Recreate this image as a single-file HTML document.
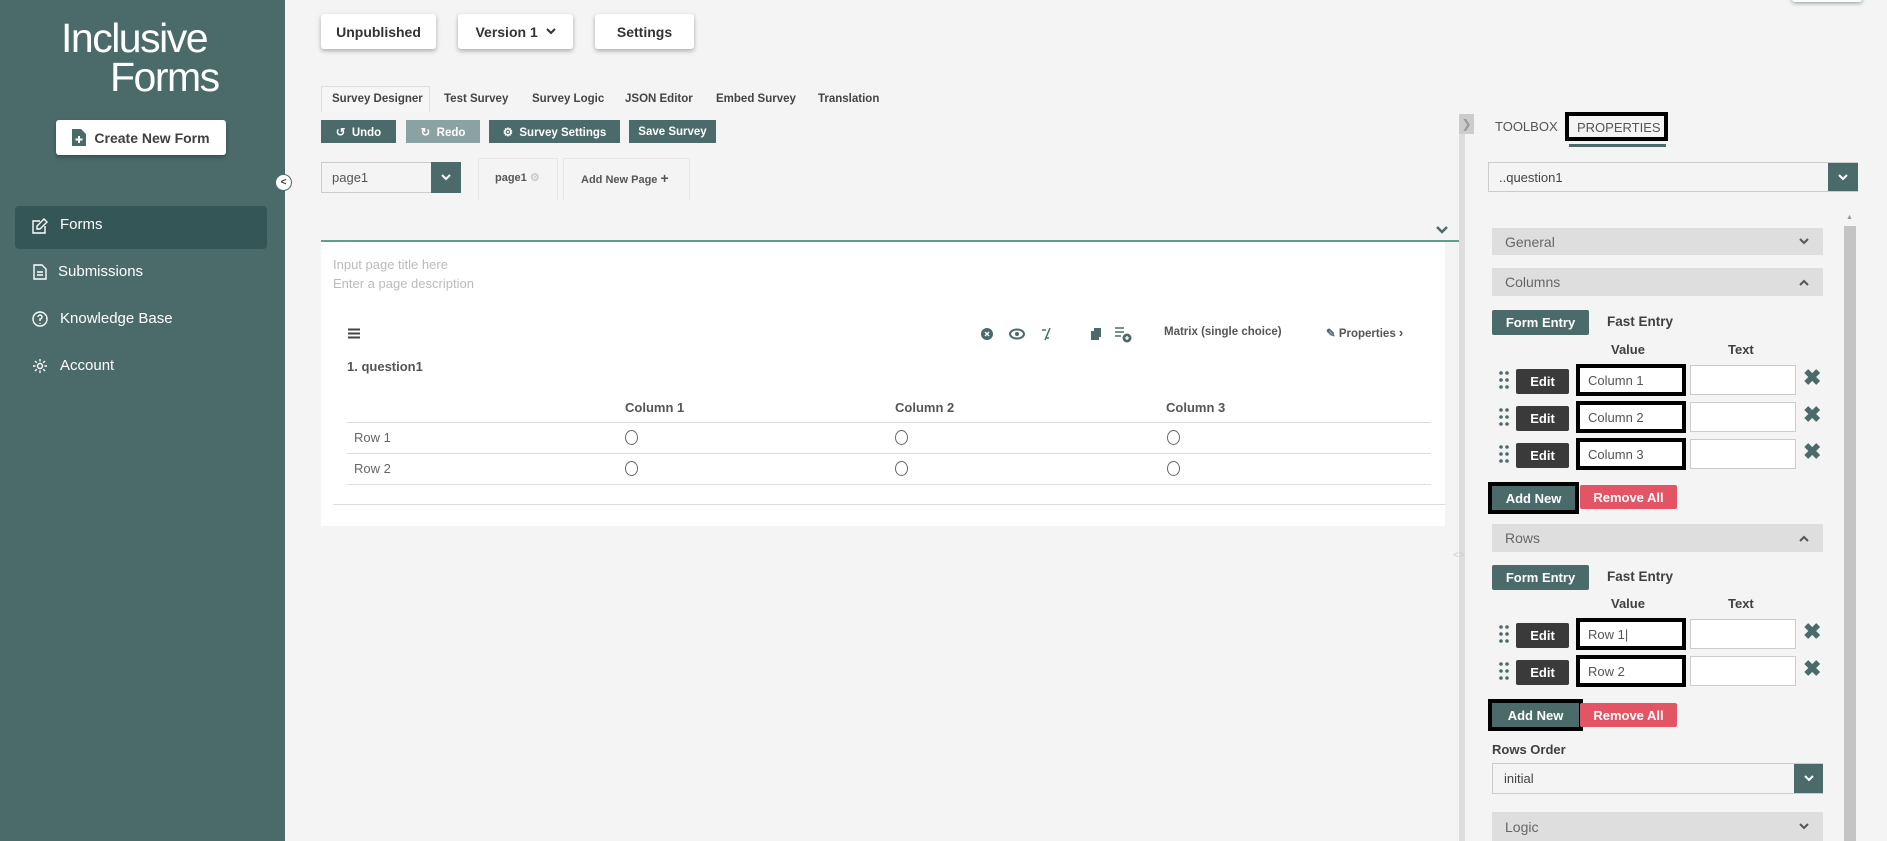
<!DOCTYPE html>
<html><head><meta charset="utf-8"><style>
*{box-sizing:border-box;margin:0;padding:0}
body{width:1887px;height:841px;overflow:hidden;background:#f4f4f4;font-family:"Liberation Sans",sans-serif;position:relative;color:#404040}
.a{position:absolute;white-space:nowrap}
#sb{left:0;top:0;width:285px;height:841px;background:#4b6b6b}
.logo{color:#fff;font-size:41px;line-height:40px;letter-spacing:-1.5px}
.nav{color:#fff;font-size:15px;left:58px}
.nv{left:32px;width:16px;height:16px}
.tb{background:#fff;border-radius:3px;box-shadow:0 2px 5px rgba(0,0,0,.3);font-size:14px;font-weight:bold;color:#333;display:flex;align-items:center;justify-content:center}
.tab{font-size:11.5px;font-weight:bold;color:#444;top:93px}
.gb{background:#4b6b6b;color:#fff;font-size:11.5px;font-weight:bold;display:flex;align-items:center;justify-content:center;height:23px;top:120px}
.bar{background:#dedede;color:#666;font-size:14px;display:flex;align-items:center;padding-left:13px;left:1492px;width:331px}
.bar svg{position:absolute;right:14px}
.fe{background:#4b6b6b;color:#fff;font-weight:bold;font-size:13px;left:1492px;width:97px;height:25px;display:flex;align-items:center;justify-content:center;border-radius:2px}
.fe2{left:1607px;font-size:13.5px;font-weight:bold;color:#404040}
.hd{font-size:13px;font-weight:bold;color:#404040}
.ed{left:1516px;width:53px;height:25px;background:#3a3a3a;color:#fff;font-weight:bold;font-size:13px;display:flex;align-items:center;justify-content:center;border-radius:2px}
.vi{left:1576px;width:110px;height:32px;border:4px solid #000;background:#fff;font-size:13px;color:#555;padding:5px 0 0 8px}
.ti{left:1690px;width:106px;height:30px;border:1px solid #ccc;background:#fff}
.x{left:1803px;font-size:22px;font-weight:bold;color:#4b6b6b;line-height:22px}
.dr{left:1499px;width:10px;height:18px}
.an{left:1488px;width:91px;height:32px;border:4px solid #000;background:#4b6b6b;color:#fff;font-weight:bold;font-size:13px;display:flex;align-items:center;justify-content:center}
.ra{left:1580px;width:97px;height:24px;background:#e35565;color:#fff;font-weight:bold;font-size:13px;display:flex;align-items:center;justify-content:center;border-radius:2px}
.rad{width:13px;height:15px;border:1px solid #666;border-radius:50%}
.ln{height:1px;background:#ddd}
.dd{background:#4b6b6b;display:flex;align-items:center;justify-content:center}
</style></head><body>
<div id="sb" class="a"></div>
<div class="a logo" style="left:61px;top:18px">Inclusive</div>
<div class="a logo" style="left:110px;top:57px">Forms</div>
<div class="a tb" style="left:56px;top:120px;width:170px;height:35px;font-size:14px;color:#404040;gap:8px"><svg width="14" height="17" viewBox="0 0 14 17"><path d="M0 0h9l5 5v12H0z" fill="#4b6b6b"/><path d="M7 7v7M3.5 10.5h7" stroke="#fff" stroke-width="2"/></svg>Create New Form</div>
<div class="a" style="left:275px;top:174px;width:17px;height:17px;border-radius:50%;background:#fff;border:1px solid #4b6b6b;font-size:10px;text-align:center;line-height:15px;font-weight:bold;color:#333">&lt;</div>
<div class="a" style="left:15px;top:206px;width:252px;height:43px;background:#345656;border-radius:4px"></div>
<svg class="a nv" style="top:218px" viewBox="0 0 16 16" fill="none" stroke="#fff" stroke-width="1.4"><path d="M13 8v7H1V3h7"/><path d="M12 1l3 3-7 7H5V8z"/></svg>
<div class="a nav" style="top:216px;left:60px">Forms</div>
<svg class="a nv" style="top:264px" viewBox="0 0 16 16" fill="none" stroke="#fff" stroke-width="1.4"><path d="M2 1h8l4 4v10H2z"/><path d="M5 8h6M5 11h6"/></svg>
<div class="a nav" style="top:263px">Submissions</div>
<svg class="a nv" style="top:311px" viewBox="0 0 16 16" fill="none" stroke="#fff" stroke-width="1.4"><circle cx="8" cy="8" r="7"/><path d="M6 6a2 2 0 1 1 2 2v2M8 12v1"/></svg>
<div class="a nav" style="top:310px;left:60px">Knowledge Base</div>
<svg class="a nv" style="top:358px" viewBox="0 0 16 16" fill="none" stroke="#fff" stroke-width="1.4"><circle cx="8" cy="8" r="2.5"/><path d="M8 1v2.5M8 12.5V15M1 8h2.5M12.5 8H15M3 3l1.8 1.8M11.2 11.2L13 13M3 13l1.8-1.8M11.2 4.8L13 3"/></svg>
<div class="a nav" style="top:357px;left:60px">Account</div>

<div class="a" style="left:1792px;top:-6px;width:70px;height:8px;background:#fff;box-shadow:0 1px 4px rgba(60,90,90,.6);border-radius:3px"></div>
<div class="a tb" style="left:321px;top:14px;width:115px;height:35px">Unpublished</div>
<div class="a tb" style="left:458px;top:14px;width:115px;height:35px">Version 1&nbsp;&nbsp;<svg width="10" height="7"><path d="M1 1l4 4 4-4" stroke="#333" stroke-width="2" fill="none"/></svg></div>
<div class="a tb" style="left:595px;top:14px;width:99px;height:35px">Settings</div>

<div class="a" style="left:321px;top:86px;width:109px;height:26px;border:1px solid #ddd;border-bottom:none;background:#f6f6f6"></div>
<div class="a tab" style="left:332px">Survey Designer</div>
<div class="a tab" style="left:444px">Test Survey</div>
<div class="a tab" style="left:532px">Survey Logic</div>
<div class="a tab" style="left:625px">JSON Editor</div>
<div class="a tab" style="left:716px">Embed Survey</div>
<div class="a tab" style="left:818px">Translation</div>
<div class="a gb" style="left:321px;width:75px">&#8634;&nbsp;&nbsp;Undo</div>
<div class="a gb" style="left:406px;width:74px;background:#8ba2a2">&#8635;&nbsp;&nbsp;Redo</div>
<div class="a gb" style="left:489px;width:131px">&#9881;&nbsp;&nbsp;Survey Settings</div>
<div class="a gb" style="left:629px;width:87px">Save Survey</div>

<div class="a" style="left:321px;top:162px;width:140px;height:31px;border:1px solid #ccc;background:#f4f4f4;font-size:13px;color:#555;padding:7px 10px">page1</div>
<div class="a dd" style="left:431px;top:162px;width:30px;height:31px"><svg width="10" height="7"><path d="M1 1l4 4 4-4" stroke="#fff" stroke-width="2" fill="none"/></svg></div>
<div class="a" style="left:478px;top:158px;width:80px;height:42px;border:1px solid #e6e6e6;border-bottom:none;font-size:11px;font-weight:bold;color:#555;padding:12px 16px">page1 <span style="color:#ccc">&#9881;</span></div>
<div class="a" style="left:563px;top:158px;width:127px;height:42px;border:1px solid #e6e6e6;border-bottom:none;font-size:11px;font-weight:bold;color:#555;padding:11px 17px">Add New Page <b style="font-size:14px">+</b></div>
<svg class="a" style="left:1436px;top:226px" width="12" height="9"><path d="M1 1l5 5 5-5" stroke="#4b6b6b" stroke-width="2.5" fill="none"/></svg>
<div class="a" style="left:321px;top:240px;width:1138px;height:2px;background:#5aa08c"></div>
<div class="a" style="left:321px;top:242px;width:1124px;height:284px;background:#fff"></div>
<div class="a" style="left:333px;top:257px;font-size:13px;color:#bbb">Input page title here</div>
<div class="a" style="left:333px;top:276px;font-size:13px;color:#bbb">Enter a page description</div>
<svg class="a" style="left:348px;top:328px" width="12" height="11"><path d="M0 1.5h12M0 5.5h12M0 9.5h12" stroke="#444" stroke-width="2"/></svg>
<svg class="a" style="left:980px;top:326px" width="130" height="16"><circle cx="7" cy="8" r="6" fill="#4b6b6b"/><path d="M5 6l4 4M9 6l-4 4" stroke="#fff" stroke-width="1.4"/><ellipse cx="37" cy="8" rx="7" ry="4.5" fill="none" stroke="#4b6b6b" stroke-width="2"/><circle cx="37" cy="8" r="2" fill="#4b6b6b"/><path d="M70 2l-5 12M62 4h4M66 12h3" stroke="#4b6b6b" stroke-width="1.5"/><rect x="111" y="5" width="8" height="9" fill="#4b6b6b"/><rect x="114" y="2" width="7" height="9" fill="#4b6b6b"/></svg>
<svg class="a" style="left:1114px;top:326px" width="20" height="18"><path d="M1 2h9M1 6h9M1 10h6" stroke="#4b6b6b" stroke-width="1.5"/><circle cx="13" cy="12" r="4.5" fill="#4b6b6b"/><path d="M13 10v4M11 12h4" stroke="#fff" stroke-width="1.3"/></svg>
<div class="a" style="left:1164px;top:326px;font-size:11.5px;font-weight:bold;color:#555">Matrix (single choice)</div>
<div class="a" style="left:1326px;top:325px;font-size:11.5px;font-weight:bold;color:#555"><span style="color:#4b6b6b">&#9998;</span> Properties <span style="font-size:13px">&#8250;</span></div>
<div class="a" style="left:347px;top:359px;font-size:13px;font-weight:bold;color:#555">1. question1</div>
<div class="a hd" style="left:625px;top:400px;font-size:13px;color:#555">Column 1</div>
<div class="a hd" style="left:895px;top:400px;font-size:13px;color:#555">Column 2</div>
<div class="a hd" style="left:1166px;top:400px;font-size:13px;color:#555">Column 3</div>
<div class="a ln" style="left:347px;top:422px;width:1084px"></div>
<div class="a ln" style="left:347px;top:453px;width:1084px"></div>
<div class="a ln" style="left:347px;top:484px;width:1084px"></div>
<div class="a ln" style="left:333px;top:504px;width:1112px"></div>
<div class="a" style="left:354px;top:430px;font-size:13px;color:#666">Row 1</div>
<div class="a" style="left:354px;top:461px;font-size:13px;color:#666">Row 2</div>
<div class="a rad" style="left:625px;top:430px"></div><div class="a rad" style="left:895px;top:430px"></div><div class="a rad" style="left:1167px;top:430px"></div>
<div class="a rad" style="left:625px;top:461px"></div><div class="a rad" style="left:895px;top:461px"></div><div class="a rad" style="left:1167px;top:461px"></div>

<div class="a" style="left:1459px;top:114px;width:6px;height:727px;background:#ddd"></div>
<div class="a" style="left:1459px;top:114px;width:15px;height:20px;background:#ccc;color:#999;font-size:12px;text-align:center;line-height:20px">&#10095;</div>
<div class="a" style="left:1453px;top:550px;font-size:10px;color:#ccc">&lt;&gt;</div>
<div class="a" style="left:1495px;top:119px;font-size:13px;color:#555">TOOLBOX</div>
<div class="a" style="left:1565px;top:112px;width:103px;height:29px;border:4px solid #000;font-size:13px;color:#555;padding:4px 0 0 8px">PROPERTIES</div>
<div class="a" style="left:1569px;top:144px;width:97px;height:3px;background:#4b6b6b"></div>
<div class="a" style="left:1488px;top:162px;width:370px;height:30px;border:1px solid #ccc;font-size:13px;color:#444;padding:7px 10px">..question1</div>
<div class="a dd" style="left:1828px;top:163px;width:30px;height:28px"><svg width="10" height="7"><path d="M1 1l4 4 4-4" stroke="#fff" stroke-width="2" fill="none"/></svg></div>
<div class="a" style="left:1844px;top:226px;width:12px;height:615px;background:#c4c4c4"></div>
<div class="a" style="left:1846px;top:214px;font-size:7px;color:#999">&#9650;</div>

<div class="a bar" style="top:228px;height:27px">General<svg width="10" height="7"><path d="M1 1l4 4 4-4" stroke="#555" stroke-width="2" fill="none"/></svg></div>
<div class="a bar" style="top:268px;height:28px">Columns<svg width="10" height="7"><path d="M1 6l4-4 4 4" stroke="#555" stroke-width="2" fill="none"/></svg></div>
<div class="a fe" style="top:310px">Form Entry</div>
<div class="a fe2" style="top:314px">Fast Entry</div>
<div class="a hd" style="left:1611px;top:342px">Value</div>
<div class="a hd" style="left:1728px;top:342px">Text</div>

<svg class="a dr" style="top:371px" viewBox="0 0 10 18" fill="#4b6b6b"><circle cx="2" cy="2" r="1.8"/><circle cx="8" cy="2" r="1.8"/><circle cx="2" cy="9" r="1.8"/><circle cx="8" cy="9" r="1.8"/><circle cx="2" cy="16" r="1.8"/><circle cx="8" cy="16" r="1.8"/></svg>
<div class="a ed" style="top:369px">Edit</div><div class="a vi" style="top:364px">Column 1</div><div class="a ti" style="top:365px"></div><div class="a x" style="top:367px">&#10006;</div>
<svg class="a dr" style="top:408px" viewBox="0 0 10 18" fill="#4b6b6b"><circle cx="2" cy="2" r="1.8"/><circle cx="8" cy="2" r="1.8"/><circle cx="2" cy="9" r="1.8"/><circle cx="8" cy="9" r="1.8"/><circle cx="2" cy="16" r="1.8"/><circle cx="8" cy="16" r="1.8"/></svg>
<div class="a ed" style="top:406px">Edit</div><div class="a vi" style="top:401px">Column 2</div><div class="a ti" style="top:402px"></div><div class="a x" style="top:404px">&#10006;</div>
<svg class="a dr" style="top:445px" viewBox="0 0 10 18" fill="#4b6b6b"><circle cx="2" cy="2" r="1.8"/><circle cx="8" cy="2" r="1.8"/><circle cx="2" cy="9" r="1.8"/><circle cx="8" cy="9" r="1.8"/><circle cx="2" cy="16" r="1.8"/><circle cx="8" cy="16" r="1.8"/></svg>
<div class="a ed" style="top:443px">Edit</div><div class="a vi" style="top:438px">Column 3</div><div class="a ti" style="top:439px"></div><div class="a x" style="top:441px">&#10006;</div>
<div class="a an" style="top:482px">Add New</div><div class="a ra" style="top:485px">Remove All</div>

<div class="a bar" style="top:524px;height:28px">Rows<svg width="10" height="7"><path d="M1 6l4-4 4 4" stroke="#555" stroke-width="2" fill="none"/></svg></div>
<div class="a fe" style="top:565px">Form Entry</div>
<div class="a fe2" style="top:569px">Fast Entry</div>
<div class="a hd" style="left:1611px;top:596px">Value</div>
<div class="a hd" style="left:1728px;top:596px">Text</div>
<svg class="a dr" style="top:625px" viewBox="0 0 10 18" fill="#4b6b6b"><circle cx="2" cy="2" r="1.8"/><circle cx="8" cy="2" r="1.8"/><circle cx="2" cy="9" r="1.8"/><circle cx="8" cy="9" r="1.8"/><circle cx="2" cy="16" r="1.8"/><circle cx="8" cy="16" r="1.8"/></svg>
<div class="a ed" style="top:623px">Edit</div><div class="a vi" style="top:618px">Row 1|</div><div class="a ti" style="top:619px"></div><div class="a x" style="top:621px">&#10006;</div>
<svg class="a dr" style="top:662px" viewBox="0 0 10 18" fill="#4b6b6b"><circle cx="2" cy="2" r="1.8"/><circle cx="8" cy="2" r="1.8"/><circle cx="2" cy="9" r="1.8"/><circle cx="8" cy="9" r="1.8"/><circle cx="2" cy="16" r="1.8"/><circle cx="8" cy="16" r="1.8"/></svg>
<div class="a ed" style="top:660px">Edit</div><div class="a vi" style="top:655px">Row 2</div><div class="a ti" style="top:656px"></div><div class="a x" style="top:658px">&#10006;</div>
<div class="a an" style="top:699px;width:95px;height:32px">Add New</div><div class="a ra" style="top:703px">Remove All</div>
<div class="a hd" style="left:1492px;top:742px">Rows Order</div>
<div class="a" style="left:1492px;top:763px;width:331px;height:31px;border:1px solid #ccc;font-size:13px;color:#444;padding:7px 11px">initial</div>
<div class="a dd" style="left:1794px;top:764px;width:29px;height:29px"><svg width="10" height="7"><path d="M1 1l4 4 4-4" stroke="#fff" stroke-width="2" fill="none"/></svg></div>
<div class="a bar" style="top:812px;height:29px">Logic<svg width="10" height="7"><path d="M1 1l4 4 4-4" stroke="#555" stroke-width="2" fill="none"/></svg></div>
</body></html>
